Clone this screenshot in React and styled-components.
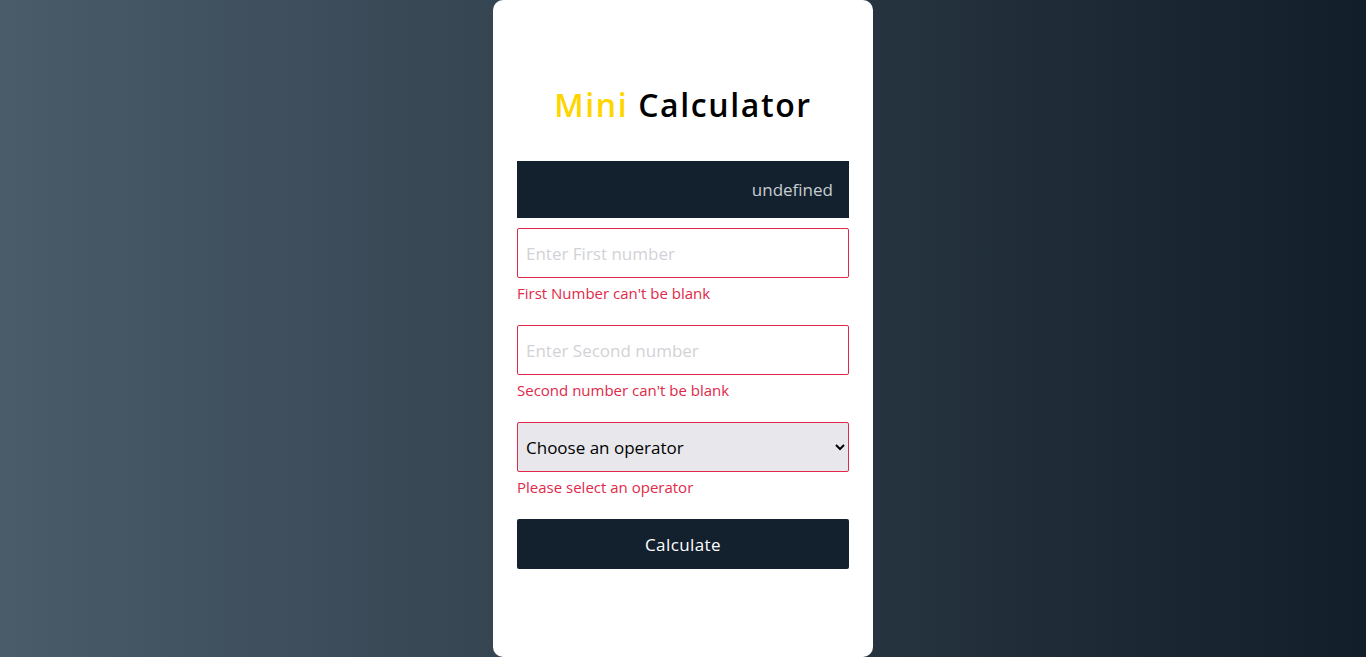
import React, { useState } from "react";
import styled, { createGlobalStyle } from "styled-components";

const colors = {
  dark: "#13212e",
  error: "#e0294a",
  accent: "#ffd500",
  select: "#e8e7ec",
};

const GlobalStyle = createGlobalStyle`
  html, body {
    margin: 0;
    padding: 0;
    height: 100%;
  }
  body {
    font-family: "Open Sans", "Liberation Sans", sans-serif;
  }
  #root {
    height: 100%;
  }
`;

const Page = styled.div`
  min-height: 100vh;
  display: flex;
  justify-content: center;
  background: linear-gradient(to right, #4a5b69, #121e29);
`;

const Card = styled.div`
  width: 380px;
  box-sizing: border-box;
  min-height: 100vh;
  background-color: #fff;
  border-radius: 10px;
  padding: 85px 24px 24px;
`;

const Title = styled.h1`
  margin: 0 0 36px;
  text-align: center;
  font-size: 32px;
  font-weight: 600;
  letter-spacing: 1.6px;
  line-height: 40px;
  color: #000;
`;

const Highlight = styled.span`
  color: ${colors.accent};
`;

const Display = styled.div`
  height: 57px;
  background-color: ${colors.dark};
  color: #c8cdd2;
  display: flex;
  align-items: center;
  justify-content: flex-end;
  padding: 0 16px;
  font-size: 17px;
  margin-bottom: 10px;
`;

const Field = styled.div`
  display: flex;
  flex-direction: column;
  margin-bottom: 22px;
`;

const Input = styled.input`
  height: 50px;
  box-sizing: border-box;
  border: 1px solid ${colors.error};
  border-radius: 2px;
  padding: 0 8px;
  font-family: inherit;
  font-size: 17px;
  outline: none;

  &::placeholder {
    color: #d2d2d6;
  }
`;

const Select = styled.select`
  height: 50px;
  box-sizing: border-box;
  border: 1px solid ${colors.error};
  border-radius: 2px;
  padding: 0 4px;
  background-color: ${colors.select};
  color: #000;
  font-family: inherit;
  font-size: 17px;
  outline: none;
`;

const ErrorText = styled.p`
  margin: 5px 0 0;
  color: ${colors.error};
  font-size: 15px;
  line-height: 20px;
`;

const Button = styled.button`
  width: 100%;
  height: 50px;
  border: none;
  border-radius: 2px;
  background-color: ${colors.dark};
  color: #fff;
  font-family: inherit;
  font-size: 17px;
  letter-spacing: 0.4px;
  cursor: pointer;
`;

const App = () => {
  const [first, setFirst] = useState("");
  const [second, setSecond] = useState("");
  const [op, setOp] = useState("");

  return (
    <Page>
      <GlobalStyle />
      <Card>
        <Title>
          <Highlight>Mini</Highlight> Calculator
        </Title>
        <Display>undefined</Display>

        <Field>
          <Input
            placeholder="Enter First number"
            value={first}
            onChange={(e) => setFirst(e.target.value)}
          />
          <ErrorText>First Number can't be blank</ErrorText>
        </Field>

        <Field>
          <Input
            placeholder="Enter Second number"
            value={second}
            onChange={(e) => setSecond(e.target.value)}
          />
          <ErrorText>Second number can't be blank</ErrorText>
        </Field>

        <Field>
          <Select value={op} onChange={(e) => setOp(e.target.value)}>
            <option value="">Choose an operator</option>
            <option value="+">+</option>
            <option value="-">-</option>
            <option value="*">*</option>
            <option value="/">/</option>
          </Select>
          <ErrorText>Please select an operator</ErrorText>
        </Field>

        <Button>Calculate</Button>
      </Card>
    </Page>
  );
};

export default App;
